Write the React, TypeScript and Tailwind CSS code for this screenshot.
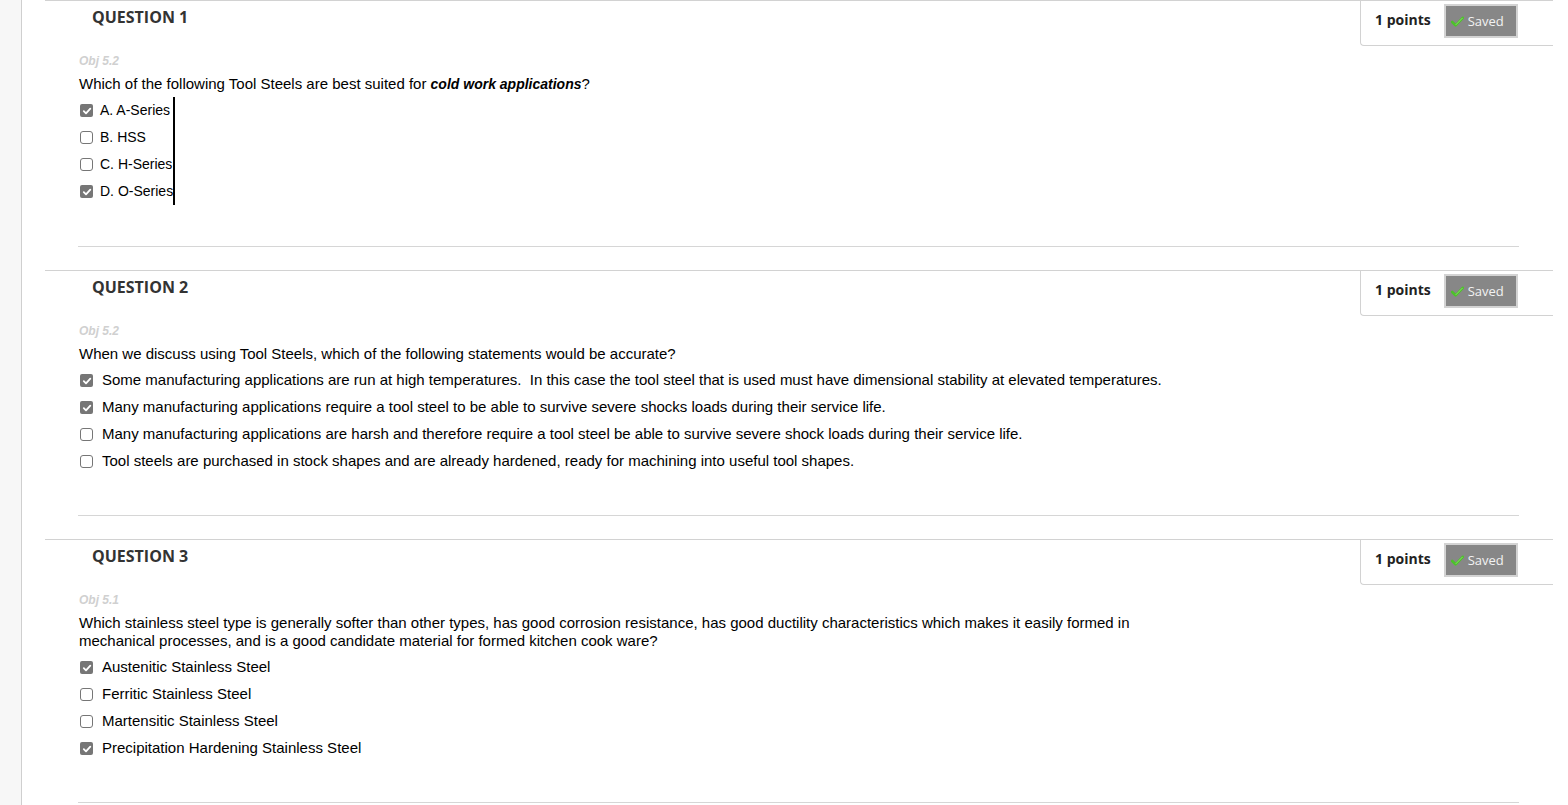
import React from 'react';

type Answer = { label?: string; text: string; checked: boolean };

interface QuestionProps {
  number: number;
  obj: string;
  children: React.ReactNode;
  answers: Answer[];
  compact?: boolean;
}

const Box: React.FC<{ checked: boolean }> = ({ checked }) =>
  checked ? (
    <span className="w-[13px] h-[13px] rounded-[2px] bg-[#767676] flex items-center justify-center shrink-0">
      <svg width="10" height="10" viewBox="0 0 10 10">
        <path d="M1.8 5.2 L4 7.4 L8.3 2.6" fill="none" stroke="#fff" strokeWidth="1.8" strokeLinecap="round" strokeLinejoin="round" />
      </svg>
    </span>
  ) : (
    <span className="w-[13px] h-[13px] rounded-[3px] border border-[#767676] bg-white shrink-0" />
  );

const SavedBadge: React.FC = () => (
  <div className="h-[34px] w-[74px] bg-[#878787] border-2 border-[#d3d3d3] flex items-center pl-[5px] gap-[4px]">
    <svg width="13" height="11" viewBox="0 0 13 11">
      <path d="M1.2 6 L4.6 9.3 L11.8 1.8" fill="none" stroke="#4cc22a" strokeWidth="2.6" strokeLinecap="round" strokeLinejoin="round" />
      <path d="M5 8.6 L11.3 2.2" fill="none" stroke="#9be07c" strokeWidth="0.8" strokeLinecap="round" />
    </svg>
    <span className="text-[13px] text-[#f2f2f2] font-['Open_Sans',sans-serif] leading-none">Saved</span>
  </div>
);

const Question: React.FC<QuestionProps> = ({ number, obj, children, answers, compact }) => (
  <div className="border-t border-[#d2d2d2] mb-[23px]">
    <div className="flex justify-between items-start">
      <div className="pl-[47px] pt-[5px] leading-[22px] text-[16px] font-bold text-[#333] font-['Open_Sans',sans-serif]">
        QUESTION {number}
      </div>
      <div className="w-[193px] h-[45px] border-l border-b border-[#d2d2d2] rounded-bl-[4px] flex items-start pt-[3px] pl-[14px] gap-[13px]">
        <span className="h-[31px] flex items-center text-[14px] font-bold text-[#222] font-['Open_Sans',sans-serif]">1 points</span>
        <SavedBadge />
      </div>
    </div>
    <div className="pl-[34px] pr-[34px]">
      <div className="mt-[8px] leading-[14px] text-[12px] italic font-bold text-[#d0d0d0] font-['Liberation_Sans',Arial,sans-serif]">
        {obj}
      </div>
      <div className="mt-[7px] leading-[18px] text-[15px] text-black font-['Liberation_Sans',Arial,sans-serif]">
        {children}
      </div>
      <div className={compact ? 'mt-[4px] inline-flex flex-col border-r-2 border-black' : 'mt-[4px] flex flex-col'}>
        {answers.map((a, i) => (
          <div key={i} className={compact ? 'h-[27px] flex items-center pl-[1px] gap-[7px]' : 'h-[27px] flex items-center pl-[1px] gap-[9px]'}>
            <Box checked={a.checked} />
            <span className={compact ? 'text-[14px] text-black font-["Liberation_Sans",Arial,sans-serif] whitespace-pre' : "text-[15px] text-black font-['Liberation_Sans',Arial,sans-serif] whitespace-pre"}>
              {a.label && <span className="text-[14px]">{a.label} </span>}
              {a.text}
            </span>
          </div>
        ))}
      </div>
      <div className={compact ? 'mt-[41px] border-t border-[#d6d6d6] -ml-[1px]' : 'mt-[40px] border-t border-[#d6d6d6] -ml-[1px]'} />
    </div>
  </div>
);

export default function App() {
  return (
    <div className="flex min-h-[805px] bg-white">
      <div className="w-[22px] shrink-0 bg-[#f7f7f7] border-r border-[#cfcfcf]" />
      <div className="flex-1 pl-[23px] pr-[15px]">
        <Question
          number={1}
          obj="Obj 5.2"
          compact
          answers={[
            { label: 'A.', text: 'A-Series', checked: true },
            { label: 'B.', text: 'HSS', checked: false },
            { label: 'C.', text: 'H-Series', checked: false },
            { label: 'D.', text: 'O-Series', checked: true },
          ]}
        >
          Which of the following Tool Steels are best suited for <b className="text-[14px]"><i>cold work applications</i></b>?
        </Question>
        <Question
          number={2}
          obj="Obj 5.2"
          answers={[
            {
              text: 'Some manufacturing applications are run at high temperatures.  In this case the tool steel that is used must have dimensional stability at elevated temperatures.',
              checked: true,
            },
            {
              text: 'Many manufacturing applications require a tool steel to be able to survive severe shocks loads during their service life.',
              checked: true,
            },
            {
              text: 'Many manufacturing applications are harsh and therefore require a tool steel be able to survive severe shock loads during their service life.',
              checked: false,
            },
            {
              text: 'Tool steels are purchased in stock shapes and are already hardened, ready for machining into useful tool shapes.',
              checked: false,
            },
          ]}
        >
          When we discuss using Tool Steels, which of the following statements would be accurate?
        </Question>
        <Question
          number={3}
          obj="Obj 5.1"
          answers={[
            { text: 'Austenitic Stainless Steel', checked: true },
            { text: 'Ferritic Stainless Steel', checked: false },
            { text: 'Martensitic Stainless Steel', checked: false },
            { text: 'Precipitation Hardening Stainless Steel', checked: true },
          ]}
        >
          Which stainless steel type is generally softer than other types, has good corrosion resistance, has good ductility characteristics which makes it easily formed in
          <br />
          mechanical processes, and is a good candidate material for formed kitchen cook ware?
        </Question>
      </div>
    </div>
  );
}
